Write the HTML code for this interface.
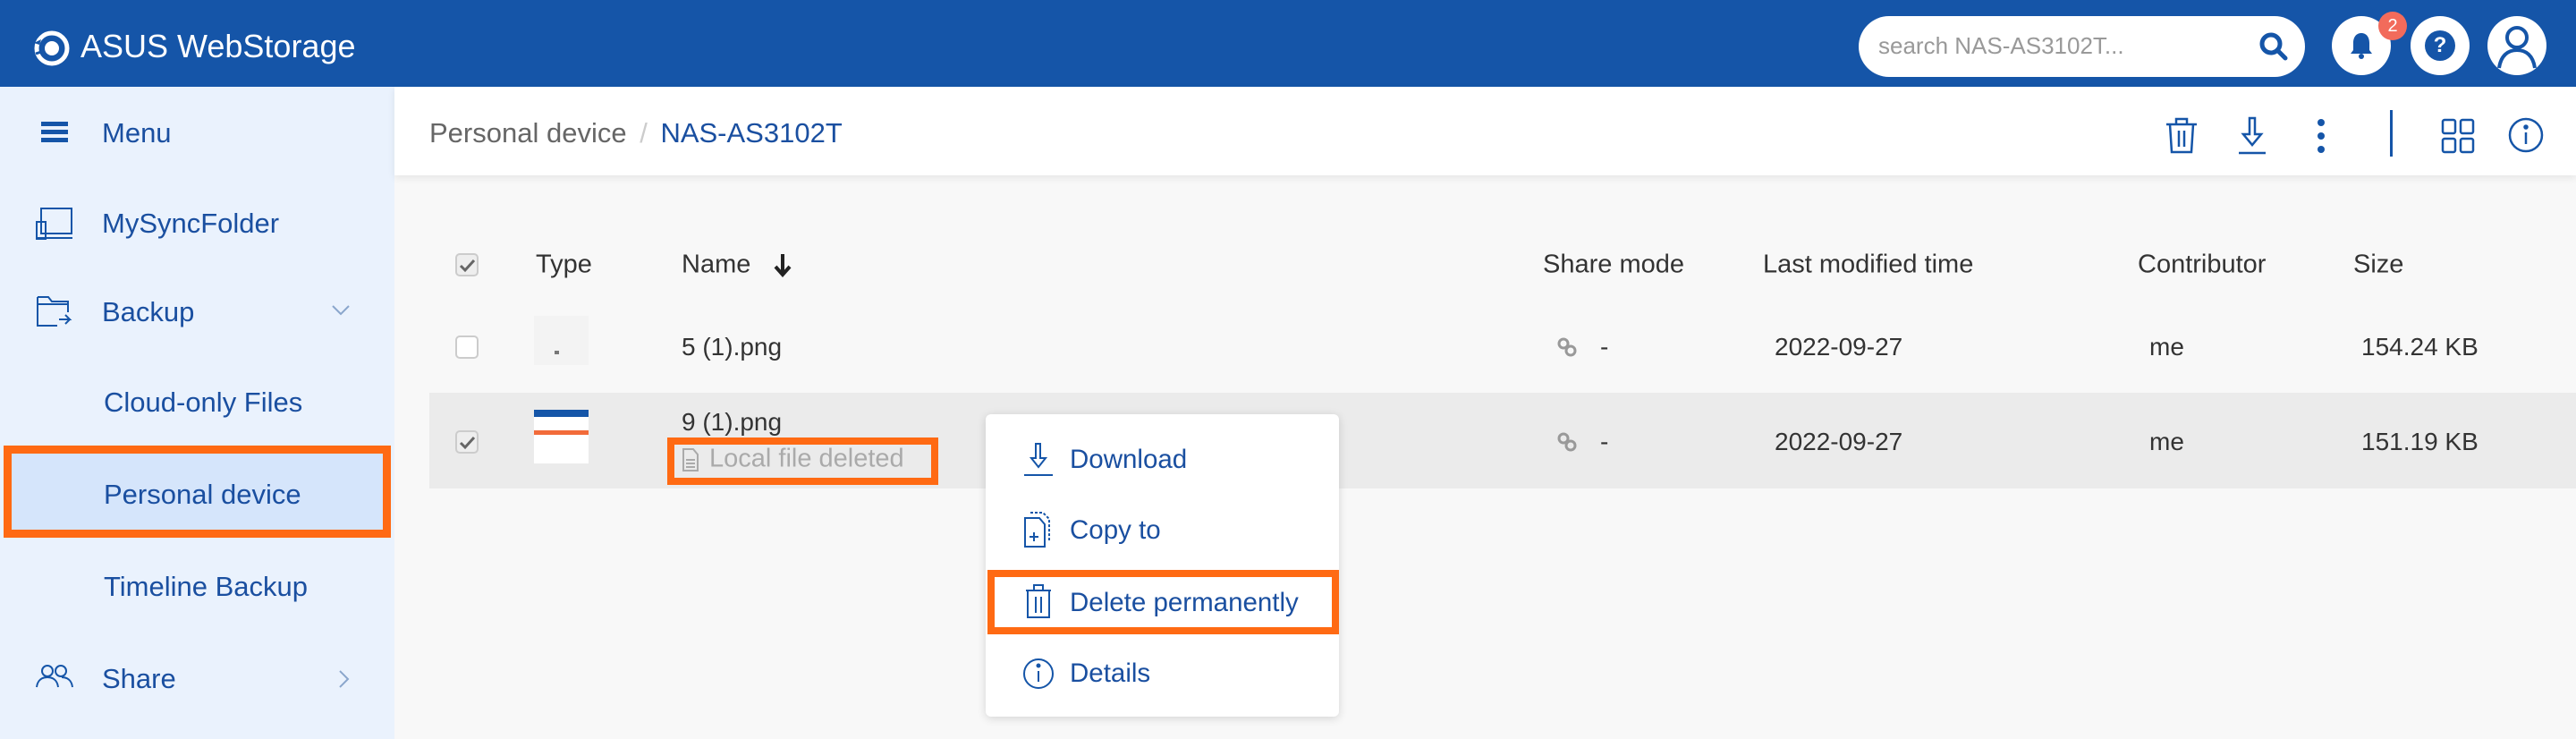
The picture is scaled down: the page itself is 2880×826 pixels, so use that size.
<!DOCTYPE html>
<html><head><meta charset="utf-8"><style>
*{margin:0;padding:0;box-sizing:border-box}
body{width:2880px;height:826px;overflow:hidden;font-family:"Liberation Sans",sans-serif;background:#f8f8f8;position:relative}
.a{position:absolute;white-space:nowrap}
.hdr{left:0;top:0;width:2880px;height:97px;background:#1555a8}
.side{left:0;top:97px;width:441px;height:729px;background:#eaf2fd}
.si{color:#1a4fa0;font-size:31px;transform:translateY(-50%)}
.top{left:441px;top:97px;width:2439px;height:99px;background:#fff;box-shadow:0 3px 8px rgba(0,0,0,.08)}
.th{color:#333;font-size:29px;transform:translateY(-50%)}
.td{color:#333;font-size:28px;transform:translateY(-50%)}
.mi{color:#1a4fa0;font-size:29.5px;transform:translateY(-50%)}
.cb{width:26px;height:26px;border:2px solid #ccc;border-radius:5px;background:#fff}
</style></head><body>
<div class="a hdr"></div>
<svg class="a" style="left:36px;top:32px" width="44" height="44" viewBox="0 0 44 44"><circle cx="22" cy="22" r="17" fill="none" stroke="#fff" stroke-width="5"/><circle cx="22" cy="22" r="8" fill="#fff"/><path d="M2 16l6 2 2-6" fill="#1555a8"/><path d="M4 28l6-2" stroke="#1555a8" stroke-width="3"/></svg>
<div class="a" style="left:90px;top:31px;color:#fff;font-size:36px">ASUS WebStorage</div>
<div class="a" style="left:2078px;top:18px;width:499px;height:68px;background:#fff;border-radius:34px"></div>
<div class="a" style="left:2100px;top:36px;color:#999;font-size:26px">search NAS-AS3102T...</div>
<svg class="a" style="left:2524px;top:34px" width="36" height="36" viewBox="0 0 36 36"><circle cx="15" cy="15" r="10" fill="none" stroke="#1555a8" stroke-width="5"/><path d="M22 22l9 9" stroke="#1555a8" stroke-width="5" stroke-linecap="round"/></svg>
<div class="a" style="left:2607px;top:18px;width:66px;height:66px;border-radius:50%;background:#fff"></div>
<svg class="a" style="left:2624px;top:34px" width="32" height="34" viewBox="0 0 32 34"><path d="M16 3c-6 0-9 5-9 11v8l-3 4h24l-3-4v-8c0-6-3-11-9-11z" fill="#1555a8"/><circle cx="16" cy="29" r="3" fill="#1555a8"/></svg>
<div class="a" style="left:2659px;top:13px;width:32px;height:32px;border-radius:50%;background:#f26b5b;color:#fff;font-size:20px;text-align:center;line-height:32px">2</div>
<div class="a" style="left:2695px;top:18px;width:66px;height:66px;border-radius:50%;background:#fff"></div>
<div class="a" style="left:2711px;top:34px;width:34px;height:34px;border-radius:50%;background:#1555a8;color:#fff;font-weight:bold;font-size:24px;text-align:center;line-height:34px">?</div>
<div class="a" style="left:2781px;top:18px;width:66px;height:66px;border-radius:50%;background:#fff"></div>
<svg class="a" style="left:2786px;top:22px" width="56" height="58" viewBox="0 0 56 58"><circle cx="28" cy="20" r="11" fill="none" stroke="#1555a8" stroke-width="4"/><path d="M8 54c2-14 10-20 20-20s18 6 20 20" fill="none" stroke="#1555a8" stroke-width="4"/></svg>

<div class="a side"></div>
<div class="a" style="left:4px;top:498px;width:433px;height:103px;background:#d5e5fb;border:9px solid #ff6a13"></div>
<svg class="a" style="left:46px;top:134px" width="30" height="26"><rect y="2" width="30" height="5" fill="#1555a8"/><rect y="11" width="30" height="5" fill="#1555a8"/><rect y="20" width="30" height="5" fill="#1555a8"/></svg>
<div class="a si" style="left:114px;top:149px">Menu</div>
<svg class="a" style="left:40px;top:232px" width="42" height="36" viewBox="0 0 42 36" fill="none" stroke="#1555a8" stroke-width="2"><rect x="6" y="1" width="34" height="28"/><path d="M1 34h40"/><rect x="1" y="16" width="10" height="19"/></svg>
<div class="a si" style="left:114px;top:250px">MySyncFolder</div>
<svg class="a" style="left:40px;top:330px" width="44" height="38" viewBox="0 0 44 38" fill="none" stroke="#1555a8" stroke-width="2"><path d="M2 2h12l4 5h18v12M2 2v32h22"/><path d="M2 10h34M26 27h12l-5-5M38 27l-5 5"/></svg>
<div class="a si" style="left:114px;top:349px">Backup</div>
<svg class="a" style="left:370px;top:340px" width="22" height="14"><path d="M2 2l9 9 9-9" fill="none" stroke="#8aa6cc" stroke-width="2"/></svg>
<div class="a si" style="left:116px;top:450px">Cloud-only Files</div>
<div class="a si" style="left:116px;top:553px">Personal device</div>
<div class="a si" style="left:116px;top:656px">Timeline Backup</div>
<svg class="a" style="left:40px;top:742px" width="42" height="28" viewBox="0 0 42 28" fill="none" stroke="#1555a8" stroke-width="2"><circle cx="13" cy="8" r="6"/><path d="M1 26c1-8 6-11 12-11s11 3 12 11"/><circle cx="28" cy="8" r="6"/><path d="M29 15c6 0 11 3 12 11"/></svg>
<div class="a si" style="left:114px;top:759px">Share</div>
<svg class="a" style="left:378px;top:748px" width="14" height="22"><path d="M2 2l9 9-9 9" fill="none" stroke="#8aa6cc" stroke-width="2"/></svg>

<div class="a top"></div>
<div class="a" style="left:480px;top:149px;transform:translateY(-50%);font-size:31px;color:#666">Personal device <span style="color:#ccc;margin:0 6px">/</span> <span style="color:#1a4fa0">NAS-AS3102T</span></div>
<svg class="a" style="left:2420px;top:130px" width="38" height="42" viewBox="0 0 38 42" fill="none" stroke="#1555a8" stroke-width="2.5"><path d="M2 9h34M13 9V3h12v6M6 9l2 31h22l2-31M16 16v18M22 16v18"/></svg>
<svg class="a" style="left:2500px;top:130px" width="36" height="44" viewBox="0 0 36 44" fill="none" stroke="#1555a8" stroke-width="2.5"><path d="M15 2h6v18h7l-10 12-10-12h7z"/><path d="M3 41h30"/></svg>
<svg class="a" style="left:2588px;top:130px" width="14" height="44"><circle cx="7" cy="7" r="4" fill="#1555a8"/><circle cx="7" cy="22" r="4" fill="#1555a8"/><circle cx="7" cy="37" r="4" fill="#1555a8"/></svg>
<div class="a" style="left:2672px;top:123px;width:3px;height:52px;background:#1555a8"></div>
<svg class="a" style="left:2729px;top:132px" width="38" height="40" fill="none" stroke="#1555a8" stroke-width="2.5"><rect x="2" y="2" width="14" height="15" rx="2"/><rect x="22" y="2" width="14" height="15" rx="2"/><rect x="2" y="23" width="14" height="15" rx="2"/><rect x="22" y="23" width="14" height="15" rx="2"/></svg>
<svg class="a" style="left:2804px;top:131px" width="40" height="40" fill="none" stroke="#1555a8" stroke-width="2.5"><circle cx="20" cy="20" r="18"/><path d="M20 17v13"/><circle cx="20" cy="11" r="1.5" fill="#1555a8"/></svg>

<div class="a cb" style="left:509px;top:283px;border-color:#ccc;background:#eee"></div>
<svg class="a" style="left:512px;top:288px" width="20" height="18"><path d="M3 9l5 5 10-11" fill="none" stroke="#666" stroke-width="3"/></svg>
<div class="a th" style="left:599px;top:296px">Type</div>
<div class="a th" style="left:762px;top:296px">Name</div>
<svg class="a" style="left:864px;top:282px" width="22" height="28"><path d="M11 2v22M3 16l8 9 8-9" fill="none" stroke="#222" stroke-width="4"/></svg>
<div class="a th" style="left:1725px;top:296px">Share mode</div>
<div class="a th" style="left:1971px;top:296px">Last modified time</div>
<div class="a th" style="left:2390px;top:296px">Contributor</div>
<div class="a th" style="left:2631px;top:296px">Size</div>

<div class="a cb" style="left:509px;top:375px"></div>
<div class="a" style="left:597px;top:353px;width:61px;height:55px;background:#f3f3f3"></div>
<div class="a" style="left:620px;top:392px;width:5px;height:4px;background:#777"></div>
<div class="a td" style="left:762px;top:388px">5 (1).png</div>
<svg class="a" style="left:1740px;top:376px" width="24" height="24" fill="none" stroke="#999" stroke-width="3"><circle cx="8" cy="8" r="5"/><circle cx="16" cy="16" r="5"/></svg>
<div class="a td" style="left:1789px;top:388px">-</div>
<div class="a td" style="left:1984px;top:388px">2022-09-27</div>
<div class="a td" style="left:2403px;top:388px">me</div>
<div class="a td" style="left:2640px;top:388px">154.24 KB</div>

<div class="a" style="left:480px;top:439px;width:2400px;height:107px;background:#ebebeb"></div>
<div class="a cb" style="left:509px;top:481px;background:#eee"></div>
<svg class="a" style="left:512px;top:486px" width="20" height="18"><path d="M3 9l5 5 10-11" fill="none" stroke="#666" stroke-width="3"/></svg>
<div class="a" style="left:597px;top:458px;width:61px;height:60px;background:#fff"></div>
<div class="a" style="left:597px;top:458px;width:61px;height:8px;background:#1555a8"></div>
<div class="a" style="left:597px;top:481px;width:61px;height:5px;background:#f26b3a"></div>
<div class="a td" style="left:762px;top:472px">9 (1).png</div>
<div class="a" style="left:746px;top:489px;width:303px;height:53px;border:8px solid #ff6a13;background:#ebebeb"></div>
<svg class="a" style="left:762px;top:500px" width="20" height="28" fill="none" stroke="#aaa" stroke-width="2"><path d="M2 2h11l5 6v18H2z M5 14h10M5 18h10M5 22h10"/></svg>
<div class="a" style="left:793px;top:513px;transform:translateY(-50%);font-size:29px;color:#aaa">Local file deleted</div>
<svg class="a" style="left:1740px;top:482px" width="24" height="24" fill="none" stroke="#999" stroke-width="3"><circle cx="8" cy="8" r="5"/><circle cx="16" cy="16" r="5"/></svg>
<div class="a td" style="left:1789px;top:494px">-</div>
<div class="a td" style="left:1984px;top:494px">2022-09-27</div>
<div class="a td" style="left:2403px;top:494px">me</div>
<div class="a td" style="left:2640px;top:494px">151.19 KB</div>

<div class="a" style="left:1102px;top:463px;width:395px;height:338px;background:#fff;border-radius:6px;box-shadow:0 2px 10px rgba(0,0,0,.15)"></div>
<div class="a" style="left:1104px;top:637px;width:393px;height:72px;border:8px solid #ff6a13"></div>
<svg class="a" style="left:1144px;top:494px" width="34" height="40" fill="none" stroke="#1555a8" stroke-width="2"><path d="M14 2h5v16h6l-8 10-8-10h5z"/><path d="M1 37h32"/></svg>
<div class="a mi" style="left:1196px;top:514px">Download</div>
<svg class="a" style="left:1144px;top:571px" width="34" height="42" fill="none" stroke="#1555a8" stroke-width="2"><path d="M2 8h16l6 7v25H2z"/><path d="M8 2h14l7 7v24" stroke-dasharray="3 2"/><path d="M12 24v10M7 29h10"/></svg>
<div class="a mi" style="left:1196px;top:593px">Copy to</div>
<svg class="a" style="left:1146px;top:652px" width="30" height="40" fill="none" stroke="#1555a8" stroke-width="2"><path d="M1 8h28M10 8V2h10v6M3 8v30h24V8M12 15v18M18 15v18"/></svg>
<div class="a mi" style="left:1196px;top:674px">Delete permanently</div>
<svg class="a" style="left:1144px;top:734px" width="36" height="38" fill="none" stroke="#1555a8" stroke-width="2"><circle cx="17" cy="19" r="16"/><path d="M17 16v12"/><circle cx="17" cy="10" r="1.5" fill="#1555a8"/></svg>
<div class="a mi" style="left:1196px;top:753px">Details</div>
</body></html>
